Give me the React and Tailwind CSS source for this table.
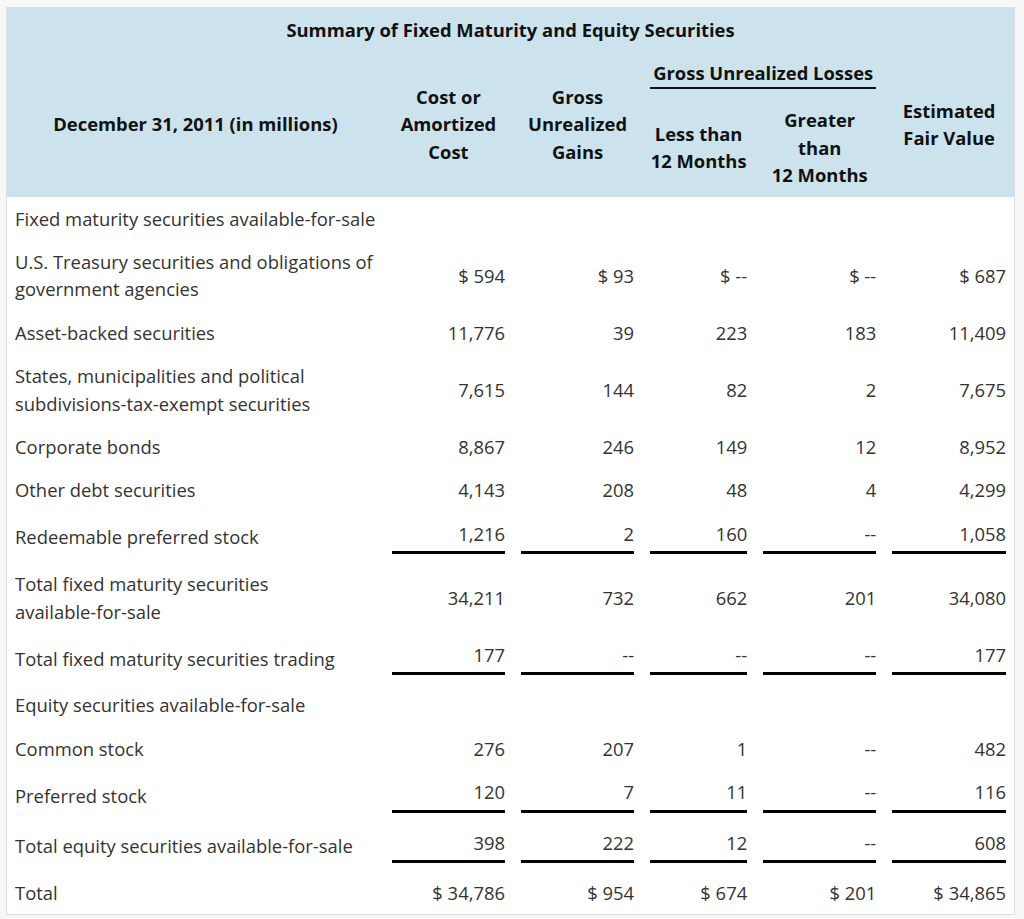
import React from 'react';

const rows = [
  { label: 'Fixed maturity securities available-for-sale', section: true },
  { label: ['U.S. Treasury securities and obligations of', 'government agencies'], values: ['$ 594', '$ 93', '$ --', '$ --', '$ 687'] },
  { label: 'Asset-backed securities', values: ['11,776', '39', '223', '183', '11,409'] },
  { label: ['States, municipalities and political', 'subdivisions-tax-exempt securities'], values: ['7,615', '144', '82', '2', '7,675'] },
  { label: 'Corporate bonds', values: ['8,867', '246', '149', '12', '8,952'] },
  { label: 'Other debt securities', values: ['4,143', '208', '48', '4', '4,299'] },
  { label: 'Redeemable preferred stock', values: ['1,216', '2', '160', '--', '1,058'], underline: true },
  { label: ['Total fixed maturity securities', 'available-for-sale'], values: ['34,211', '732', '662', '201', '34,080'] },
  { label: 'Total fixed maturity securities trading', values: ['177', '--', '--', '--', '177'], underline: true },
  { label: 'Equity securities available-for-sale', section: true },
  { label: 'Common stock', values: ['276', '207', '1', '--', '482'] },
  { label: 'Preferred stock', values: ['120', '7', '11', '--', '116'], underline: true },
  { label: 'Total equity securities available-for-sale', values: ['398', '222', '12', '--', '608'], underline: true },
  { label: 'Total', values: ['$ 34,786', '$ 954', '$ 674', '$ 201', '$ 34,865'] },
];

function Label({ label }) {
  if (Array.isArray(label)) {
    return (
      <>
        {label[0]}
        <br />
        {label[1]}
      </>
    );
  }
  return label;
}

export default function App() {
  return (
    <div className="min-h-screen bg-[#f7f7f7] pl-[6px] pt-[7px] font-['Open_Sans',sans-serif] text-[18.4px] leading-[27.4px]">
      <table className="w-[1009px] table-fixed border border-[#dedede] bg-white">
        <colgroup>
          <col className="w-[377px]" />
          <col className="w-[129px]" />
          <col className="w-[129px]" />
          <col className="w-[113px]" />
          <col className="w-[129px]" />
          <col className="w-[130px]" />
        </colgroup>
        <thead className="bg-[#cce3ed] font-bold text-[#111]">
          <tr>
            <th colSpan={6} className="px-2 py-2 text-center">
              Summary of Fixed Maturity and Equity Securities
            </th>
          </tr>
          <tr>
            <th rowSpan={2} className="px-2 text-center align-middle">
              December 31, 2011 (in millions)
            </th>
            <th rowSpan={2} className="px-2 text-center align-middle">
              Cost or<br />Amortized<br />Cost
            </th>
            <th rowSpan={2} className="px-2 text-center align-middle">
              Gross<br />Unrealized<br />Gains
            </th>
            <th colSpan={2} className="px-2 pt-2 pb-[9.5px] text-center">
              <div className="border-b-2 border-[#111]">Gross Unrealized Losses</div>
            </th>
            <th rowSpan={2} className="px-2 text-center align-middle">
              Estimated<br />Fair Value
            </th>
          </tr>
          <tr>
            <th className="px-2 py-2 text-center align-middle">
              Less than<br />12 Months
            </th>
            <th className="px-2 py-2 text-center align-middle">
              Greater<br />than<br />12 Months
            </th>
          </tr>
        </thead>
        <tbody className="text-[#333]">
          {rows.map((row, i) => (
            <tr key={i}>
              <td className="py-2 pl-2 pr-0 align-middle whitespace-nowrap">
                <Label label={row.label} />
              </td>
              {row.section
                ? [0, 1, 2, 3, 4].map((j) => <td key={j} className="py-2" />)
                : row.values.map((v, j) => (
                    <td key={j} className="px-2 py-2 text-right align-middle">
                      {row.underline ? (
                        <div className="border-b-[3px] border-black pb-1">{v}</div>
                      ) : (
                        v
                      )}
                    </td>
                  ))}
            </tr>
          ))}
        </tbody>
      </table>
    </div>
  );
}
